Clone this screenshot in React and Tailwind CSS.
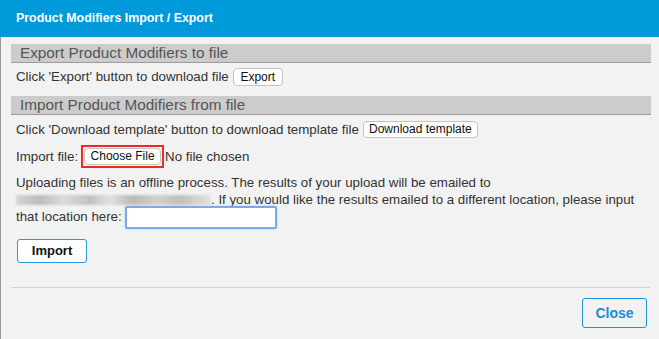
import React from 'react';

const font = { fontFamily: '"Liberation Sans", Arial, sans-serif' };

const SectionHeader = ({ children }) => (
  <div className="h-[19px] bg-[#cccccc] border-b border-[#a19a9a] pl-[9px] text-[15.3px] leading-[18px] text-[#555]">
    {children}
  </div>
);

const SmallButton = ({ children, className = '' }) => (
  <button
    type="button"
    className={`h-[17px] whitespace-nowrap bg-white border border-[#c4c4c4] rounded-[4px] text-[12px] leading-[15px] text-[#111] ${className}`}
  >
    {children}
  </button>
);

const App = () => {
  return (
    <div className="w-[659px] h-[339px] flex flex-col bg-[#f2f2f2] overflow-hidden" style={font}>
      {/* title bar */}
      <div className="h-[37px] shrink-0 bg-[#0099da] flex items-center pl-4 text-white font-bold text-[12.4px]">
        Product Modifiers Import / Export
      </div>

      <div className="flex-1 flex flex-col border-l border-[#9a9a9a] pl-[10px] pr-[8px] text-[13.3px] text-[#333]">
        <div className="mt-[7px]">
          <SectionHeader>Export Product Modifiers to file</SectionHeader>
        </div>
        <div className="mt-[5px] h-[18px] pl-[5px] flex items-center gap-[4px] whitespace-nowrap">
          <span>Click 'Export' button to download file</span>
          <SmallButton className="h-[18px] w-[50px]">Export</SmallButton>
        </div>

        <div className="mt-[10px]">
          <SectionHeader>Import Product Modifiers from file</SectionHeader>
        </div>
        <div className="mt-[6px] h-[17px] pl-[5px] flex items-center gap-[4px] whitespace-nowrap">
          <span>Click 'Download template' button to download template file</span>
          <SmallButton className="w-[115px]">Download template</SmallButton>
        </div>

        <div className="mt-[7px] h-[23px] pl-[5px] flex items-center whitespace-nowrap">
          <span className="mr-[3px]">Import file:</span>
          <span className="border-2 border-[#ec2b1f] p-[1px] flex">
            <SmallButton className="w-[77px]">Choose File</SmallButton>
          </span>
          <span className="ml-[1px]">No file chosen</span>
        </div>

        <p className="mt-[6px] pl-[5px] leading-[17px] whitespace-nowrap">
          Uploading files is an offline process. The results of your upload will be emailed to
          <br />
          <span className="inline-block align-middle w-[195px] h-[10px] blur-[1px] bg-[linear-gradient(90deg,#d6d6d6_0%,#bcbcbc_12%,#dadada_24%,#c2c2c2_38%,#e0e0e0_48%,#b9b9b9_60%,#d2d2d2_72%,#c0c0c0_84%,#e2e2e2_100%)]" />
          . If you would like the results emailed to a different location, please input
          <br />
          that location here:{' '}
          <input
            type="text"
            className="inline-block align-middle -my-[4px] w-[152px] h-[23px] bg-white border-2 border-[#79aaea] rounded-[2px] shadow-[0_0_2px_#9cc4f3] outline-none"
          />
        </p>

        <div className="mt-[14px] pl-[6px]">
          <button
            type="button"
            className="w-[70px] h-[24px] bg-white border border-[#2b9ad8] rounded-[3px] text-[13px] font-bold text-[#111]"
          >
            Import
          </button>
        </div>

        <div className="mt-[24px] border-t border-[#d4d4d4] mr-[1px]" />
        <div className="mt-[10px] flex justify-end pr-[4px]">
          <button
            type="button"
            className="w-[65px] h-[30px] border border-[#1d96d8] rounded-[3px] text-[14px] font-bold text-[#1a8fd6]"
          >
            Close
          </button>
        </div>
      </div>
    </div>
  );
};

export default App;
